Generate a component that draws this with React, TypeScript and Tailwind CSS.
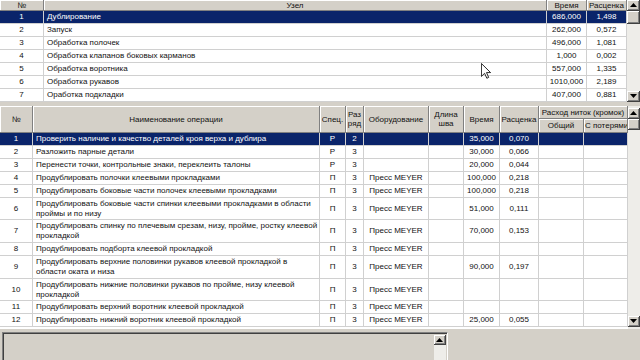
import React from "react";

const topRows: string[][] = [
  ["1", "Дублирование", "686,000", "1,498"],
  ["2", "Запуск", "262,000", "0,572"],
  ["3", "Обработка полочек", "496,000", "1,081"],
  ["4", "Обработка клапанов боковых карманов", "1,000", "0,002"],
  ["5", "Обработка воротника", "557,000", "1,335"],
  ["6", "Обработка рукавов", "1010,000", "2,189"],
  ["7", "Оработка подкладки", "407,000", "0,881"],
];

type Op = { n: string; name: string[]; spec: string; rank: string; eq: string; time: string; price: string; h: string };

const ops: Op[] = [
  { n: "1", name: ["Проверить наличие и качество деталей кроя верха и дублира"], spec: "Р", rank: "2", eq: "", time: "35,000", price: "0,070", h: "h-[13px]" },
  { n: "2", name: ["Разложить парные детали"], spec: "Р", rank: "3", eq: "", time: "30,000", price: "0,066", h: "h-[13px]" },
  { n: "3", name: ["Перенести точки, контрольные знаки, переклеить талоны"], spec: "Р", rank: "3", eq: "", time: "20,000", price: "0,044", h: "h-[13px]" },
  { n: "4", name: ["Продублировать полочки клеевыми прокладками"], spec: "П", rank: "3", eq: "Пресс MEYER", time: "100,000", price: "0,218", h: "h-[13px]" },
  { n: "5", name: ["Продублировать боковые части полочек клеевыми прокладками"], spec: "П", rank: "3", eq: "Пресс MEYER", time: "100,000", price: "0,218", h: "h-[13px]" },
  { n: "6", name: ["Продублировать боковые части спинки клеевыми прокладками в области", "проймы и по низу"], spec: "П", rank: "3", eq: "Пресс MEYER", time: "51,000", price: "0,111", h: "h-[22px]" },
  { n: "7", name: ["Продублировать спинку по плечевым срезам, низу, пройме, ростку клеевой", "прокладкой"], spec: "П", rank: "3", eq: "Пресс MEYER", time: "70,000", price: "0,153", h: "h-[23px]" },
  { n: "8", name: ["Продублировать подборта клеевой прокладкой"], spec: "П", rank: "3", eq: "Пресс MEYER", time: "", price: "", h: "h-[13px]" },
  { n: "9", name: ["Продублировать верхние половинки рукавов клеевой прокладкой в", "области оката и низа"], spec: "П", rank: "3", eq: "Пресс MEYER", time: "90,000", price: "0,197", h: "h-[23px]" },
  { n: "10", name: ["Продублировать нижние половинки рукавов по пройме, низу клеевой", "прокладкой"], spec: "П", rank: "3", eq: "Пресс MEYER", time: "", price: "", h: "h-[22px]" },
  { n: "11", name: ["Продублировать верхний воротник клеевой прокладкой"], spec: "П", rank: "3", eq: "Пресс MEYER", time: "", price: "", h: "h-[13px]" },
  { n: "12", name: ["Продублировать нижний воротник клеевой прокладкой"], spec: "П", rank: "3", eq: "Пресс MEYER", time: "25,000", price: "0,055", h: "h-[13px]" },
];

const hdr =
  "flex items-center justify-center text-center bg-[#d4d0c8] border-r border-b border-[#808080] shadow-[inset_1px_1px_0_#ffffff] overflow-hidden whitespace-nowrap leading-[9px]";
const cell = "flex items-center border-r border-b border-[#d0d0d0] overflow-hidden whitespace-nowrap";

function Arrow({ up }: { up: boolean }) {
  return (
    <svg width="7" height="4" viewBox="0 0 7 4">
      {up ? <polygon points="3.5,0 7,4 0,4" fill="#000" /> : <polygon points="0,0 7,0 3.5,4" fill="#000" />}
    </svg>
  );
}

function Btn({ up, h = "h-[11px]" }: { up: boolean; h?: string }) {
  return (
    <div
      className={`${h} w-full shrink-0 flex items-center justify-center bg-[#d4d0c8] border-r border-b border-[#404040] shadow-[inset_1px_1px_0_#ffffff,inset_-1px_-1px_0_#808080]`}
    >
      <Arrow up={up} />
    </div>
  );
}

function Thumb({ h }: { h: string }) {
  return (
    <div
      className={`${h} w-full shrink-0 bg-[#d4d0c8] border-r border-b border-[#404040] shadow-[inset_1px_1px_0_#ffffff,inset_-1px_-1px_0_#808080]`}
    />
  );
}

function Scrollbar({ w, thumbH, py }: { w: string; thumbH: string; py: string }) {
  return (
    <div className={`${w} ${py} flex flex-col bg-[#eeede9] shrink-0`}>
      <Btn up />
      <Thumb h={thumbH} />
      <div className="flex-1" />
      <Btn up={false} />
    </div>
  );
}

export default function App() {
  return (
    <div className="relative w-[640px] h-[360px] overflow-hidden bg-[#d4d0c8] flex flex-col font-['Liberation_Sans',Arial,sans-serif] text-[8px] text-[#111]">
      {/* Top grid */}
      <div className="h-[102px] flex bg-white shrink-0">
        <div className="flex flex-col w-[627px]">
          <div className="grid grid-cols-[44px_503px_40px_40px] h-[11px] shrink-0">
            <div className={hdr}>№</div>
            <div className={hdr}>Узел</div>
            <div className={hdr}>Время</div>
            <div className={hdr}>Расценка</div>
          </div>
          {topRows.map((r, i) => {
            const sel = i === 0;
            return (
              <div
                key={i}
                className={`grid grid-cols-[44px_503px_40px_40px] h-[13px] shrink-0 ${sel ? "bg-[#0a246a] text-white" : ""}`}
              >
                <div className={`${cell} justify-center`}>{r[0]}</div>
                <div className={`${cell} pl-[3px]`}>{r[1]}</div>
                <div className={`${cell} justify-center`}>{r[2]}</div>
                <div className={`${cell} justify-center`}>{r[3]}</div>
              </div>
            );
          })}
        </div>
        <Scrollbar w="w-[13px]" thumbH="h-[13px]" py="py-0" />
      </div>

      {/* Splitter */}
      <div className="h-[4px] shrink-0" />

      {/* Bottom grid */}
      <div className="h-[223px] flex bg-white shrink-0">
        <div className="flex flex-col w-[628px]">
          <div className="grid grid-cols-[33px_287px_26px_18px_65px_35px_36px_39px_45px_44px] grid-rows-[13px_14px] h-[27px] shrink-0">
            <div className={`${hdr} row-span-2`}>№</div>
            <div className={`${hdr} row-span-2`}>Наименование операции</div>
            <div className={`${hdr} row-span-2`}>Спец.</div>
            <div className={`${hdr} row-span-2 flex-col`}>
              <span>Раз</span>
              <span>ряд</span>
            </div>
            <div className={`${hdr} row-span-2`}>Оборудование</div>
            <div className={`${hdr} row-span-2 flex-col`}>
              <span>Длина</span>
              <span>шва</span>
            </div>
            <div className={`${hdr} row-span-2`}>Время</div>
            <div className={`${hdr} row-span-2`}>Расценка</div>
            <div className={`${hdr} col-span-2`}>Расход ниток (кромок)</div>
            <div className={hdr}>Общий</div>
            <div className={`${hdr} justify-start pl-[1px]`}>С потерями</div>
          </div>
          {ops.map((o, i) => {
            const sel = i === 0;
            return (
              <div
                key={i}
                className={`grid grid-cols-[33px_287px_26px_18px_65px_35px_36px_39px_45px_44px] ${o.h} shrink-0 ${sel ? "bg-[#0a246a] text-white" : ""}`}
              >
                <div className={`${cell} justify-center`}>{o.n}</div>
                <div className={`${cell} pl-[3px] flex-col items-start justify-center leading-[10px]`}>
                  {o.name.map((l, k) => (
                    <span key={k}>{l}</span>
                  ))}
                </div>
                <div className={`${cell} justify-center`}>{o.spec}</div>
                <div className={`${cell} justify-center`}>{o.rank}</div>
                <div className={`${cell} justify-center`}>{o.eq}</div>
                <div className={cell} />
                <div className={`${cell} justify-center`}>{o.time}</div>
                <div className={`${cell} justify-center`}>{o.price}</div>
                <div className={cell} />
                <div className={cell} />
              </div>
            );
          })}
          <div className="flex-1" />
        </div>
        <Scrollbar w="w-[12px]" thumbH="h-[11px]" py="py-[2px]" />
      </div>

      {/* gap */}
      <div className="h-[3px] shrink-0" />

      {/* Bottom panel */}
      <div className="h-[28px] flex pl-[2px] shrink-0">
        <div className="w-[446px] flex border-t border-l border-[#808080] border-r border-r-white shadow-[inset_1px_1px_0_#404040] pt-[2px] pl-[2px]">
          <div className="flex-1" />
          <div className="w-[12px] flex flex-col bg-[#eeede9] mr-[1px]">
            <Btn up h="h-[10px]" />
          </div>
        </div>
        <div className="flex-1" />
      </div>

      {/* Mouse cursor */}
      <svg className="absolute left-[481px] top-[63px]" width="10" height="16" viewBox="0 0 12 19">
        <polygon
          points="0.5,0.5 0.5,16 4.3,12.3 7,18.2 9.2,17.2 6.6,11.4 11.5,11.4"
          fill="#fff"
          stroke="#000"
          strokeWidth="1"
        />
      </svg>
    </div>
  );
}
